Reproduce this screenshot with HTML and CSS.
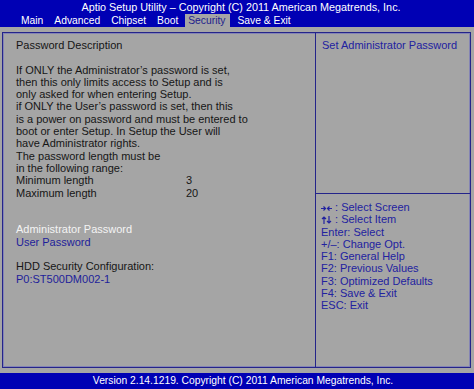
FILE: index.html
```html
<!DOCTYPE html>
<html lang="en">
<head>
<meta charset="UTF-8">
<title>Aptio Setup Utility - Security</title>
<link rel="stylesheet" href="styles.css">
</head>
<body>

<header class="header">
    <div class="title">Aptio Setup Utility – Copyright (C) 2011 American Megatrends, Inc.</div>
    <nav class="tabs">
        <span class="tab">Main</span>
        <span class="tab">Advanced</span>
        <span class="tab">Chipset</span>
        <span class="tab">Boot</span>
        <span class="tab active">Security</span>
        <span class="tab">Save &amp; Exit</span>
    </nav>
</header>

<div class="main">
    <div class="box">
        <div class="left">
            <p>Password Description</p>
            <p class="blank"></p>
            <p>If ONLY the Administrator’s password is set,</p>
            <p>then this only limits access to Setup and is</p>
            <p>only asked for when entering Setup.</p>
            <p>if ONLY the User’s password is set, then this</p>
            <p>is a power on password and must be entered to</p>
            <p>boot or enter Setup. In Setup the User will</p>
            <p>have Administrator rights.</p>
            <p>The password length must be</p>
            <p>in the following range:</p>
            <p class="row"><span class="label">Minimum length</span><span>3</span></p>
            <p class="row"><span class="label">Maximum length</span><span>20</span></p>
            <p class="blank"></p>
            <p class="blank"></p>
            <p class="selected">Administrator Password</p>
            <p class="item">User Password</p>
            <p class="blank"></p>
            <p>HDD Security Configuration:</p>
            <p class="item">P0:ST500DM002-1</p>
        </div>
        <div class="right">
            <div class="help">Set Administrator Password</div>
            <div class="keys">
                <p>
                    <svg class="arrows" width="11" height="7" viewBox="0 0 11 7">
                        <path d="M0 3.5h4M2.5 1.5l2 2-2 2M11 3.5h-4M8.5 1.5l-2 2 2 2" fill="none" stroke="currentColor" stroke-width="1.2"/>
                    </svg> : Select Screen
                </p>
                <p>
                    <svg class="arrows" width="11" height="8" viewBox="0 0 11 8">
                        <path d="M3 8V1M1 3l2-2 2 2M8 0v7M6 5l2 2 2-2" fill="none" stroke="currentColor" stroke-width="1.2"/>
                    </svg> : Select Item
                </p>
                <p>Enter: Select</p>
                <p>+/–: Change Opt.</p>
                <p>F1: General Help</p>
                <p>F2: Previous Values</p>
                <p>F3: Optimized Defaults</p>
                <p>F4: Save &amp; Exit</p>
                <p>ESC: Exit</p>
            </div>
        </div>
    </div>
</div>

<footer class="footer">Version 2.14.1219. Copyright (C) 2011 American Megatrends, Inc.</footer>

</body>
</html>
```

FILE: styles.css
```css
body {
    margin: 0;
    font-family: "Liberation Sans", Arial, sans-serif;
    font-size: 11px;
    background: #a5a5a5;
    color: #161616;
    height: 389px;
    display: flex;
    flex-direction: column;
    overflow: hidden;
}
p {
    margin: 0;
    height: 12.3px;
    line-height: 12.3px;
    white-space: nowrap;
}
.header {
    background: #0000b4;
    color: #ffffff;
    height: 27px;
}
.title {
    height: 14px;
    line-height: 14px;
    text-align: center;
    padding-left: 8px;
    font-size: 10.8px;
}
.tabs {
    display: flex;
    height: 13px;
    line-height: 13px;
    padding-left: 17px;
    gap: 3px;
    font-size: 10.3px;
}
.tab {
    padding: 0 4px;
}
.tab.active {
    background: #a5a5a5;
    color: #1e1e8c;
    padding: 0 5px 0 3px;
}
.main {
    flex: 1;
    padding: 5px 3px 5px 2px;
}
.box {
    height: 100%;
    box-sizing: border-box;
    border: 1px solid #24248a;
    box-shadow: inset 0 0 0 1px #8484b4;
    display: flex;
}
.left {
    width: 313px;
    padding: 6px 0 0 13px;
    box-sizing: border-box;
    border-right: 1px solid #24248a;
}
.row {
    display: flex;
}
.label {
    width: 170px;
}
.selected {
    color: #f4f4f4;
}
.item {
    color: #1e1e9a;
}
.right {
    flex: 1;
    display: flex;
    flex-direction: column;
    color: #2222a0;
}
.help {
    height: 161px;
    padding: 6px 0 0 6px;
    box-sizing: border-box;
    border-bottom: 1px solid #24248a;
    line-height: 12.3px;
}
.keys {
    padding: 7px 0 0 5px;
}
.arrows {
    vertical-align: -0.5px;
}
.footer {
    background: #0000b4;
    color: #ffffff;
    height: 16px;
    line-height: 16px;
    text-align: center;
    padding-left: 12px;
    font-size: 10.3px;
}
```
